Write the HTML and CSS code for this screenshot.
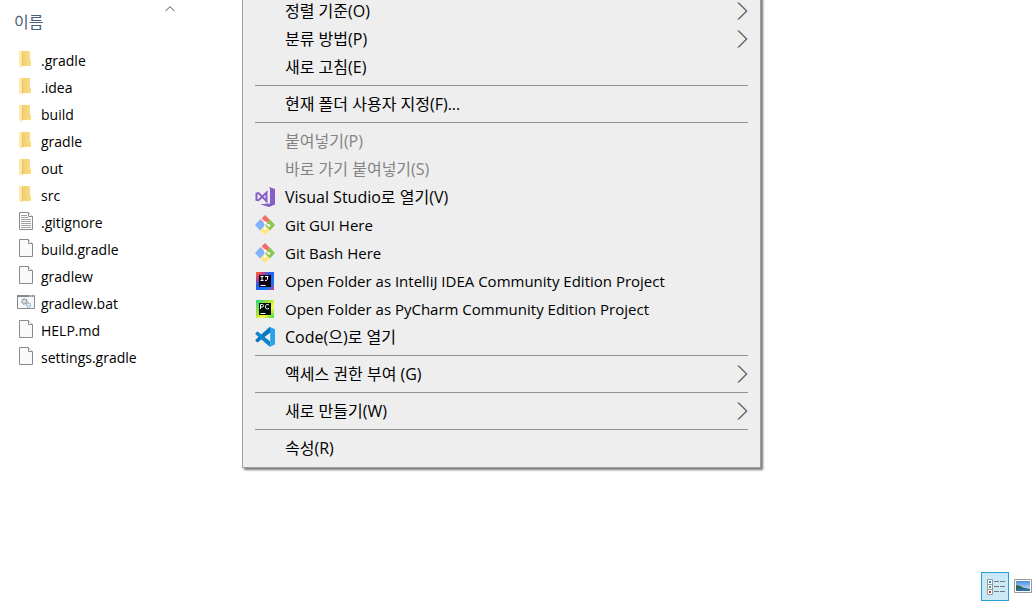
FILE: index.html
```html
<!DOCTYPE html>
<html lang="ko">
<head>
<meta charset="UTF-8">
<meta name="viewport" content="width=device-width, initial-scale=1.0">
<title>파일 탐색기</title>
<link rel="stylesheet" href="styles.css">
</head>
<body>

<!-- 공통 아이콘 -->
<svg class="defs" aria-hidden="true">
  <defs>
    <linearGradient id="folderBack" x1="0" y1="0" x2="1" y2="0">
      <stop offset="0" stop-color="#f0cd6c"/><stop offset="1" stop-color="#fbdd87"/>
    </linearGradient>
    <linearGradient id="ijBg" x1="0" y1="0" x2="1" y2="1">
      <stop offset="0" stop-color="#f97a12"/><stop offset="0.2" stop-color="#d33c7c"/><stop offset="0.4" stop-color="#2a5bea"/><stop offset="0.75" stop-color="#087cfa"/><stop offset="1" stop-color="#e5317c"/>
    </linearGradient>
    <linearGradient id="pcBg" x1="0" y1="0" x2="1" y2="1">
      <stop offset="0" stop-color="#21d789"/><stop offset="0.4" stop-color="#a8e035"/><stop offset="0.65" stop-color="#fcf84a"/><stop offset="1" stop-color="#3ddc3d"/>
    </linearGradient>
    <linearGradient id="sky" x1="0" y1="0" x2="0" y2="1">
      <stop offset="0" stop-color="#4e8de0"/><stop offset="1" stop-color="#d8edfb"/>
    </linearGradient>
  </defs>
  <symbol id="folder" viewBox="0 0 18 18">
    <path d="M4 1h9v9l1 1v5H4z" fill="url(#folderBack)"/>
    <path d="M2 1h2l2 2v13l-1 2-3-2z" fill="#ffe9a8"/>
    <path d="M5.500 3v13" stroke="#e8c266" stroke-width="1"/>
  </symbol>
  <symbol id="file" viewBox="0 0 18 18">
    <path d="M2.500 .5h9l4 4v13h-13z" fill="#f8f9fa" stroke="#8b8b8b"/>
    <path d="M11.500 .5v4h4" fill="#fff" stroke="#8b8b8b"/>
  </symbol>
  <symbol id="text" viewBox="0 0 18 18">
    <path d="M2.500 .5h9l4 4v13h-13z" fill="#fff" stroke="#8b8b8b"/>
    <path d="M11.500 .5v4h4" fill="#fff" stroke="#8b8b8b"/>
    <path d="M4 3.500h6M4 5.500h7M4 7.500h10M4 9.500h10M4 11.500h10M4 13.500h10M4 15.500h10" stroke="#a2a2a2"/>
  </symbol>
  <symbol id="bat" viewBox="0 0 18 18">
    <path d="M.5 2.500h17v13H.5z" fill="#f6f7f8" stroke="#85888c"/>
    <path d="M0 3h18" stroke="#85888c" stroke-width="2"/>
    <path d="M12 3h1M14 3h1M16 3h1" stroke="#fff"/>
    <circle cx="7.500" cy="8.500" r="2.500" fill="#ddd" stroke="#888" stroke-width="1.500" stroke-dasharray="1.200 .7"/>
    <circle cx="11.500" cy="12" r="2" fill="#e4f2fa" stroke="#7fa6c4" stroke-width="1.300" stroke-dasharray="1 .6"/>
  </symbol>
  <symbol id="git" viewBox="0 0 20 20">
    <path d="M10 0l4.800 4.800L10 9.600 5.200 4.800z" fill="#f36c6c"/>
    <path d="M5 4.500L10 9.500v1L5 15.500 0 10z" fill="#80b3ff"/>
    <path d="M15 4.500L20 10l-5 5.500-5-5v-1z" fill="#89c64d"/>
    <path d="M10 10.400l4.800 4.800L10 20l-4.800-4.800z" fill="#ffe680"/>
    <path d="M6 3.500L10 7.500v6M10 7.500l3.500 3" fill="none" stroke="#f4f4f4" stroke-width="1.200"/>
    <circle cx="10" cy="7.500" r="1.300" fill="#fff"/>
    <circle cx="10" cy="13.500" r="1.300" fill="#fff"/>
    <circle cx="14" cy="10.500" r="1.300" fill="#fff"/>
  </symbol>
  <symbol id="arrow" viewBox="0 0 12 18">
    <path d="M1 .5L9.500 9 1 17.500" fill="none" stroke="#ffe9a0" stroke-width="1"/>
    <path d="M3 .5L11.500 9 3 17.500" fill="none" stroke="#8fbcec" stroke-width="1"/>
    <path d="M2 .5L10.500 9 2 17.500" fill="none" stroke="#180a18" stroke-width="1"/>
  </symbol>
</svg>

<main class="explorer">
  <section class="files">
    <div class="files-header">
      <span>이름</span>
      <svg class="sort" viewBox="0 0 10 6"><path d="M.5 5L5 .7 9.500 5" fill="none" stroke="#555"/></svg>
    </div>
    <ul class="file-list">
      <li><svg><use href="#folder"/></svg>.gradle</li>
      <li><svg><use href="#folder"/></svg>.idea</li>
      <li><svg><use href="#folder"/></svg>build</li>
      <li><svg><use href="#folder"/></svg>gradle</li>
      <li><svg><use href="#folder"/></svg>out</li>
      <li><svg><use href="#folder"/></svg>src</li>
      <li><svg><use href="#text"/></svg>.gitignore</li>
      <li><svg><use href="#file"/></svg>build.gradle</li>
      <li><svg><use href="#file"/></svg>gradlew</li>
      <li><svg><use href="#bat"/></svg>gradlew.bat</li>
      <li><svg><use href="#file"/></svg>HELP.md</li>
      <li><svg><use href="#file"/></svg>settings.gradle</li>
    </ul>
  </section>
</main>

<!-- 마우스 오른쪽 버튼 메뉴 -->
<div class="menu" role="menu">
  <button class="item" role="menuitem"><span class="label">정렬 기준(O)</span><svg class="arrow"><use href="#arrow"/></svg></button>
  <button class="item" role="menuitem"><span class="label">분류 방법(P)</span><svg class="arrow"><use href="#arrow"/></svg></button>
  <button class="item" role="menuitem"><span class="label">새로 고침(E)</span></button>
  <hr>
  <button class="item" role="menuitem"><span class="label">현재 폴더 사용자 지정(F)...</span></button>
  <hr>
  <button class="item" role="menuitem" disabled><span class="label">붙여넣기(P)</span></button>
  <button class="item" role="menuitem" disabled><span class="label">바로 가기 붙여넣기(S)</span></button>
  <button class="item" role="menuitem">
    <svg class="icon" viewBox="0 0 20 20">
      <path d="M14 0l6 2v15.500L14 20l-9-2.800 10-.7V2z" fill="#865fc5"/>
      <path d="M1.500 6.500v6.500l2 .3L11.500 5.500v8.500L3.500 6z" fill="none" stroke="#865fc5" stroke-width="2"/>
    </svg>
    <span class="label">Visual Studio로 열기(V)</span>
  </button>
  <button class="item app" role="menuitem"><svg class="icon"><use href="#git"/></svg><span class="label">Git GUI Here</span></button>
  <button class="item app" role="menuitem"><svg class="icon"><use href="#git"/></svg><span class="label">Git Bash Here</span></button>
  <button class="item app" role="menuitem">
    <svg class="icon" viewBox="0 0 20 20">
      <path d="M1 1h18v18H1z" fill="url(#ijBg)"/>
      <path d="M4 4h12v12H4z" fill="#0a0010"/>
      <path d="M5.500 5.500h3M7 5.500v4M5.500 9.500h3M10 5.500h3.500M12.500 5.500v3q0 1-2.500 1M5.500 14.500h5" fill="none" stroke="#fff"/>
    </svg>
    <span class="label">Open Folder as IntelliJ IDEA Community Edition Project</span>
  </button>
  <button class="item app" role="menuitem">
    <svg class="icon" viewBox="0 0 20 20">
      <path d="M1 1h18v18H1z" fill="url(#pcBg)"/>
      <path d="M4 4h12v12H4z" fill="#001008"/>
      <path d="M5.500 10V5.500h2q1 0 1 1.200t-1 1.300h-2M14 6q-3.500-1.500-3.500 1.700T14 9.500M5.500 14.500h5" fill="none" stroke="#fff"/>
    </svg>
    <span class="label">Open Folder as PyCharm Community Edition Project</span>
  </button>
  <button class="item" role="menuitem">
    <svg class="icon" viewBox="0 0 20 20">
      <path d="M14.500 0L20 2.500V6L15 5.800 2.500 15.500.500 14v-1.200z" fill="#0a76bd"/>
      <path d="M.5 6l2-1.500L15 14.200v5.800L.5 7.200z" fill="#0e84cf"/>
      <path d="M14.500 0L20 2.500v15L14.500 20q.7-.5.700-1.500v-17q0-1-.7-1.500z" fill="#2ba3ec"/>
    </svg>
    <span class="label">Code(으)로 열기</span>
  </button>
  <hr>
  <button class="item" role="menuitem"><span class="label">액세스 권한 부여 (G)</span><svg class="arrow"><use href="#arrow"/></svg></button>
  <hr>
  <button class="item" role="menuitem"><span class="label">새로 만들기(W)</span><svg class="arrow"><use href="#arrow"/></svg></button>
  <hr>
  <button class="item" role="menuitem"><span class="label">속성(R)</span></button>
</div>

<footer class="views">
  <button class="view active" aria-label="자세히">
    <svg width="18" height="18" viewBox="0 0 18 18">
      <path d="M.5 1.500h5v15h-5zM.5 6.500h5M.5 11.500h5" fill="#fff" stroke="#999"/>
      <path d="M2 4h2" stroke="#2c7cb8" stroke-width="2"/>
      <path d="M2 9h2" stroke="#3c8a78" stroke-width="2"/>
      <path d="M2 14h2" stroke="#c43a1c" stroke-width="2"/>
      <path d="M7 3.500h5M13 3.500h5M7 8.500h5M13 8.500h5M7 13.500h5M13 13.500h5" stroke="#777"/>
    </svg>
  </button>
  <button class="view" aria-label="큰 아이콘">
    <svg width="18" height="14" viewBox="0 0 18 14">
      <path d="M.5 .5h17v13H.5z" fill="#fff" stroke="#999"/>
      <path d="M2 2h14v10H2z" fill="url(#sky)"/>
      <path d="M2 6q4 0 7 2.500l7 1.500v2H2z" fill="#2d6b55"/>
      <path d="M2 11q7-2 14-.5V12H2z" fill="#2f6fb5"/>
    </svg>
  </button>
</footer>

</body>
</html>
```

FILE: styles.css
```css
* {
  box-sizing: border-box;
}
body {
  display: flex;
  flex-direction: column;
  min-height: 100vh;
  margin: 0;
  background-color: #fff;
  color: #000;
  font-family: "Open Sans", "Noto Sans CJK KR", sans-serif;
  font-size: 14px;
}
button {
  border: 0;
  padding: 0;
  background: none;
  color: inherit;
  font: inherit;
}
.defs {
  position: absolute;
  width: 0;
  height: 0;
}
.explorer {
  flex: 1;
}
.files {
  width: 240px;
}
.files-header {
  display: flex;
  align-items: center;
  height: 42px;
  padding-left: 14px;
  color: #4c607a;
  font-size: 16px;
}
.sort {
  width: 10px;
  height: 6px;
  margin: 0 65px 24px auto;
}
.file-list {
  margin: 0;
  padding: 5px 0 0 17px;
  list-style: none;
}
.file-list li {
  display: flex;
  align-items: center;
  gap: 6px;
  height: 27px;
}
.file-list svg {
  width: 18px;
  height: 18px;
  margin-bottom: 3px;
}

/* 메뉴 */
.menu {
  position: absolute;
  top: -3px;
  left: 242px;
  min-width: 519px;
  padding: 0 12px 5px;
  border: 1px solid #a0a0a0;
  border-width: 0 1px 1px;
  background-color: #eee;
  box-shadow: 2px 2px 2px #777;
}
.menu hr {
  height: 1px;
  margin: 4px 0;
  border: 0;
  background-color: #919191;
}
.item {
  display: flex;
  align-items: center;
  width: 100%;
  height: 28px;
  padding-bottom: 1px;
  font-size: 16px;
  line-height: 20px;
}
.item.app {
  font-size: 15px;
}
.item:disabled {
  color: #838383;
}
.icon {
  width: 20px;
  height: 20px;
}
.label {
  margin-left: 30px;
}
.icon + .label {
  margin-left: 10px;
}
.arrow {
  width: 12px;
  height: 18px;
  margin-left: auto;
}

/* 보기 전환 버튼 */
.views {
  display: flex;
  justify-content: flex-end;
}
.view {
  display: flex;
  align-items: center;
  justify-content: flex-end;
  width: 26px;
  height: 29px;
  padding: 0 3px 2px 0;
}
.view.active {
  width: 28px;
  padding-bottom: 0;
  border: 1px solid #26a0da;
  background-color: #cbe8f6;
}
```
